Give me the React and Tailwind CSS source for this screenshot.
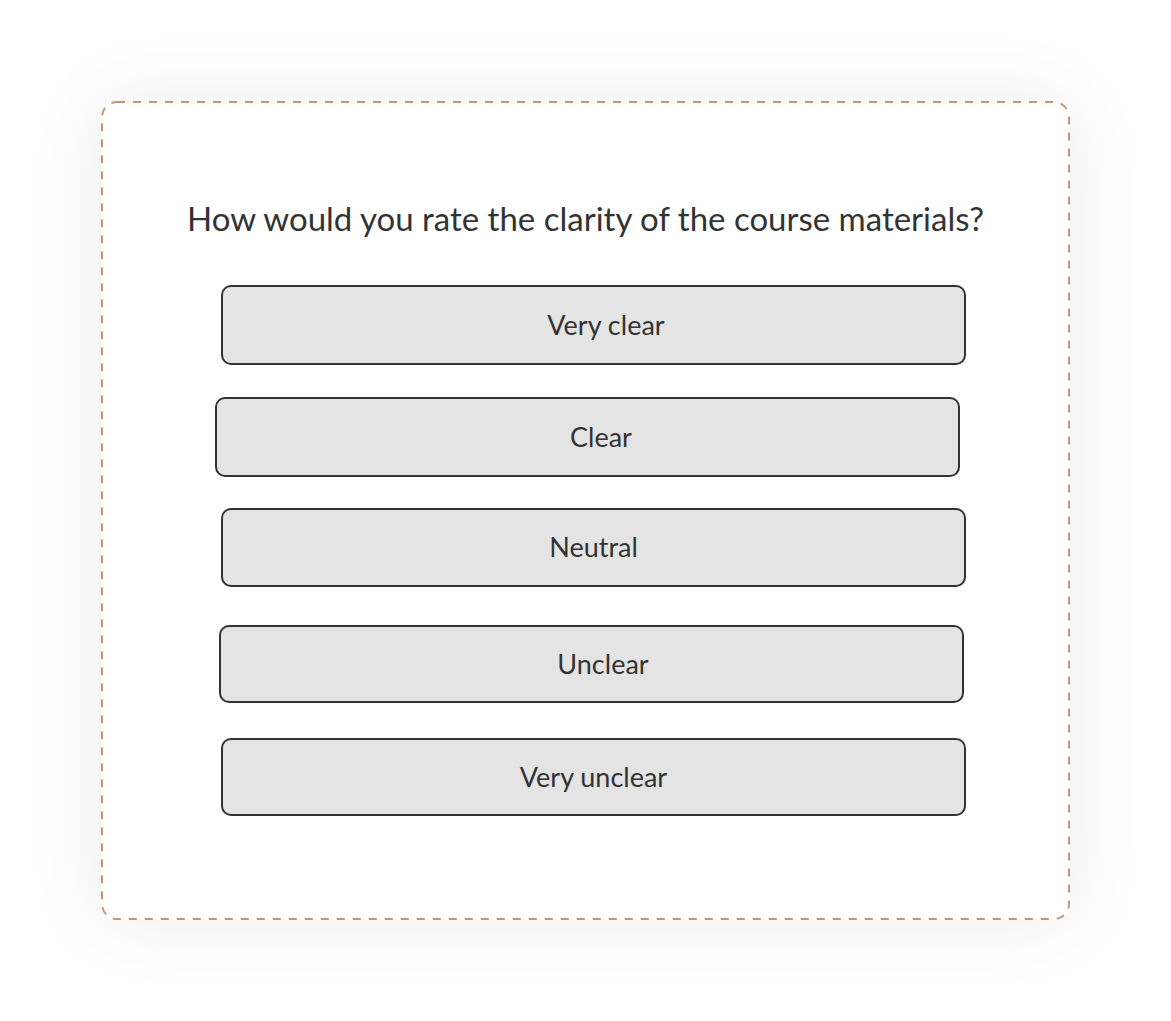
export default function App() {
  const opts = [
    { label: "Very clear", ml: "ml-[118px]", mt: "mt-[47px]", h: "h-[80px]", pl: "pl-[25px]" },
    { label: "Clear", ml: "ml-[112px]", mt: "mt-[32px]", h: "h-[80px]", pl: "pl-[27px]" },
    { label: "Neutral", ml: "ml-[118px]", mt: "mt-[31px]", h: "h-[79px]", pl: "pl-0" },
    { label: "Unclear", ml: "ml-[116px]", mt: "mt-[38px]", h: "h-[78px]", pl: "pl-[23px]" },
    { label: "Very unclear", ml: "ml-[118px]", mt: "mt-[35px]", h: "h-[78px]", pl: "pl-0" },
  ];
  return (
    <div className="w-[1171px] h-[1021px] bg-white p-[101px]" style={{ fontFamily: "Lato, 'Noto Sans', sans-serif" }}>
      <div className="relative w-[969px] h-[819px] rounded-[16px] border-2 border-transparent bg-white shadow-[0_0_80px_rgba(0,0,0,0.08)] flex flex-col">
        <svg className="absolute -left-[2px] -top-[2px] pointer-events-none" width="969" height="819" viewBox="0 0 969 819">
          <rect x="1" y="1" width="967" height="817" rx="15" ry="15" fill="none" stroke="#c4967a" strokeWidth="2" strokeDasharray="8 8" />
        </svg>
        <div className="mt-[95px] h-[40px] leading-[40px] text-center text-[33px] text-[#333333]">
          How would you rate the clarity of the course materials?
        </div>
        {opts.map((o) => (
          <div
            key={o.label}
            className={`${o.ml} ${o.mt} ${o.h} ${o.pl} w-[745px] rounded-[10px] border-2 border-[#333333] bg-[#e4e4e4] flex items-center justify-center text-[27px] text-[#333333]`}
          >
            {o.label}
          </div>
        ))}
      </div>
    </div>
  );
}
